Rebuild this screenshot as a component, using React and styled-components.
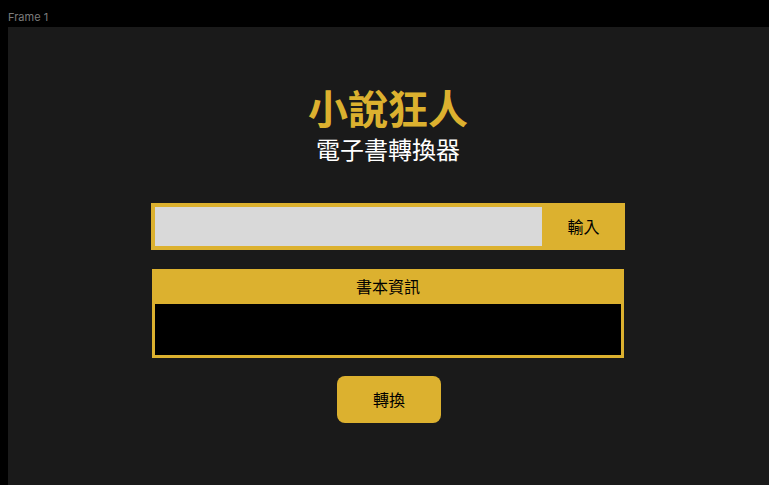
import React from "react";
import styled, { createGlobalStyle } from "styled-components";

const GlobalStyle = createGlobalStyle`
  html, body {
    margin: 0;
    padding: 0;
    background: #000;
  }
  body {
    font-family: "Noto Sans CJK TC", "Noto Sans", sans-serif;
  }
  * {
    box-sizing: border-box;
  }
`;

const GOLD = "#dcb12f";

const Canvas = styled.div`
  width: 769px;
  height: 485px;
  display: flex;
  flex-direction: column;
  overflow: hidden;
`;

const FrameLabel = styled.div`
  height: 27px;
  padding: 10px 0 0 8px;
  font-family: Inter, "Noto Sans", sans-serif;
  font-size: 11px;
  line-height: 14px;
  color: #7c7c7c;
`;

const Frame = styled.main`
  flex: 1;
  margin-left: 8px;
  background: #1a1a1a;
  display: flex;
  flex-direction: column;
  align-items: center;
  padding: 57px 1px 0 0;
`;

const Title = styled.h1`
  margin: 0;
  font-size: 40px;
  line-height: 46px;
  font-weight: 700;
  color: ${GOLD};
`;

const Subtitle = styled.h2`
  margin: 5px 0 0;
  font-size: 24px;
  line-height: 28px;
  font-weight: 400;
  color: #fff;
`;

const InputRow = styled.div`
  margin-top: 40px;
  width: 474px;
  height: 47px;
  padding: 4px 0 4px 4px;
  background: ${GOLD};
  display: flex;
`;

const UrlInput = styled.input`
  width: 387px;
  height: 39px;
  border: none;
  outline: none;
  background: #d9d9d9;
  padding: 0 10px;
  font-family: inherit;
  font-size: 16px;
`;

const PlainButton = styled.button`
  flex: 1;
  border: none;
  background: transparent;
  font-family: inherit;
  font-size: 16px;
  line-height: 20px;
  color: #000;
  cursor: pointer;
  padding: 0 0 2px;
`;

const InfoBox = styled.section`
  margin-top: 19px;
  width: 472px;
  background: ${GOLD};
  padding: 0 3px 3px;
  display: flex;
  flex-direction: column;
`;

const InfoHeader = styled.div`
  height: 35px;
  padding-bottom: 1px;
  display: flex;
  align-items: center;
  justify-content: center;
  font-size: 16px;
  line-height: 20px;
  color: #000;
`;

const InfoBody = styled.div`
  height: 51px;
  background: #000;
`;

const ConvertButton = styled.button`
  margin: 18px 0 0 2px;
  width: 104px;
  height: 47px;
  border: none;
  border-radius: 8px;
  background: ${GOLD};
  font-family: inherit;
  font-size: 16px;
  line-height: 20px;
  padding: 0 0 2px;
  color: #000;
  cursor: pointer;
`;

export default function App() {
  return (
    <>
      <GlobalStyle />
      <Canvas>
        <FrameLabel>Frame 1</FrameLabel>
        <Frame>
          <Title>小說狂人</Title>
          <Subtitle>電子書轉換器</Subtitle>
          <InputRow>
            <UrlInput type="text" />
            <PlainButton>輸入</PlainButton>
          </InputRow>
          <InfoBox>
            <InfoHeader>書本資訊</InfoHeader>
            <InfoBody />
          </InfoBox>
          <ConvertButton>轉換</ConvertButton>
        </Frame>
      </Canvas>
    </>
  );
}
